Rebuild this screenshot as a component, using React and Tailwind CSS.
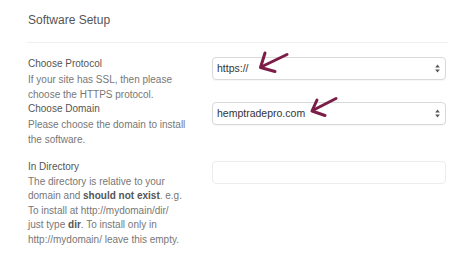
import React from 'react';

const font = { fontFamily: '"Liberation Sans", Arial, sans-serif' };

const SelectBox = ({ value }) => (
  <div className="flex h-[23px] w-[234px] items-center justify-between rounded-[4px] border border-[#d9d9d9] bg-white pl-[4px] pr-[5px] text-[10.5px] text-[#333] shadow-[0_1px_1px_rgba(0,0,0,0.04)]">
    <span>{value}</span>
    <svg width="5" height="9" viewBox="0 0 5 9" className="fill-[#555]">
      <path d="M2.5 0.5 L4.8 3.6 L0.2 3.6 Z" />
      <path d="M2.5 8.5 L4.8 5.4 L0.2 5.4 Z" />
    </svg>
  </div>
);

const Row = ({ label, lines, control, className = '', leading = 'leading-[15px]' }) => (
  <div className={`flex ${className}`}>
    <div className="w-[184px] pr-[6px]">
      <div className="mb-[2px] text-[10px] leading-[13px] text-[#555]">{label}</div>
      <div className={`whitespace-nowrap text-[10px] text-[#777] ${leading}`}>
        {lines.map((line, i) => (
          <div key={i}>{line}</div>
        ))}
      </div>
    </div>
    <div>{control}</div>
  </div>
);

const App = () => {
  return (
    <div className="relative h-[262px] w-[474px] overflow-hidden bg-white" style={font}>
      <div className="ml-[27px] w-[421px] pt-[12px]">
        <h2 className="pl-[1px] text-[12px] leading-[16px] text-[#555]">Software Setup</h2>
        <div className="mt-[14px] h-px bg-[#f0f0f0]" />

        <div className="mt-[14px] pl-[1px]">
          <Row
            label="Choose Protocol"
            control={<SelectBox value="https://" />}
            lines={['If your site has SSL, then please', 'choose the HTTPS protocol.']}
          />
          <Row
            label="Choose Domain"
            control={<SelectBox value="hemptradepro.com" />}
            lines={['Please choose the domain to install', 'the software.']}
          />
          <Row
            className="mt-[13px]"
            leading="leading-[14.4px]"
            label="In Directory"
            control={<div className="mt-[1px] h-[23px] w-[234px] rounded-[4px] border border-[#ececec] bg-white" />}
            lines={[
              'The directory is relative to your',
              <>domain and <b className="text-[#555]">should not exist</b>. e.g.</>,
              'To install at http://mydomain/dir/',
              <>just type <b className="text-[#555]">dir</b>. To install only in</>,
              'http://mydomain/ leave this empty.',
            ]}
          />
        </div>
      </div>

      {/* annotation arrows */}
      <svg className="pointer-events-none absolute left-0 top-0" width="474" height="262" viewBox="0 0 474 262">
        <g stroke="#7b1d47" strokeWidth="3" strokeLinecap="round" strokeLinejoin="round" fill="none">
          <path d="M287 54.5 L261 67" />
          <path d="M265 53 L260.5 67.5 L275 71.5" />
          <path d="M336 98.5 L312.5 110.5" />
          <path d="M317 100 L312 111 L325 115.5" />
        </g>
      </svg>
    </div>
  );
};

export default App;
